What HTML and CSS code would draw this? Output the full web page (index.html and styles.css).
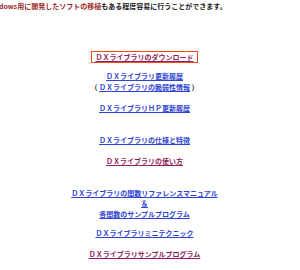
FILE: index.html
```html
<!DOCTYPE html>
<html lang="ja">
<head>
    <meta charset="UTF-8">
    <meta name="viewport" content="width=device-width, initial-scale=1.0">
    <title>ＤＸライブラリ</title>
    <link rel="stylesheet" href="styles.css">
</head>
<body>
    <p class="intro"><span class="intro-red">dows用に開発したソフトの移植</span>もある程度容易に行うことができます。</p>

    <div class="menu">
        <div class="download-box">
            <a href="#" class="visited">ＤＸライブラリのダウンロード</a>
        </div>

        <p class="item gap-first">
            <a href="#">ＤＸライブラリ更新履歴</a><br>
            （ <a href="#">ＤＸライブラリの脆弱性情報</a> ）
        </p>

        <p class="item gap">
            <a href="#">ＤＸライブラリＨＰ更新履歴</a>
        </p>

        <p class="item gap-lg">
            <a href="#">ＤＸライブラリの仕様と特徴</a>
        </p>

        <p class="item gap">
            <a href="#" class="visited">ＤＸライブラリの使い方</a>
        </p>

        <p class="item gap-lg">
            <a href="#">ＤＸライブラリの関数リファレンスマニュアル<br>＆<br>各関数のサンプルプログラム</a>
        </p>

        <p class="item gap-sm">
            <a href="#">ＤＸライブラリミニテクニック</a>
        </p>

        <p class="item gap">
            <a href="#" class="visited">ＤＸライブラリサンプルプログラム</a>
        </p>
    </div>
</body>
</html>
```

FILE: styles.css
```css
* {
    box-sizing: border-box;
    margin: 0;
    padding: 0;
}

body {
    font-family: "Noto Sans CJK JP", "Noto Sans", sans-serif;
    font-size: 7px;
    font-weight: bold;
    line-height: 10.5px;
    color: #222;
    background-color: #ffffff;
    width: 289px;
}

.intro {
    padding-top: 1.25px;
    margin-left: -1px;
    white-space: nowrap;
}

.intro-red {
    color: #9a2b2b;
}

.menu {
    display: flex;
    flex-direction: column;
    align-items: center;
    text-align: center;
    margin-top: 38.75px;
}

a {
    color: #2f45d2;
    text-decoration: underline;
    text-decoration-thickness: 1px;
}

a.visited {
    color: #8e1f5c;
}

.download-box {
    border: 1.5px solid #f04a1e;
    padding: 0 3.5px;
    line-height: 10px;
}

.gap-first {
    margin-top: 8.75px;
}

.gap {
    margin-top: 10.5px;
}

.gap-sm {
    margin-top: 9px;
}

.gap-lg {
    margin-top: 21.5px;
}
```
